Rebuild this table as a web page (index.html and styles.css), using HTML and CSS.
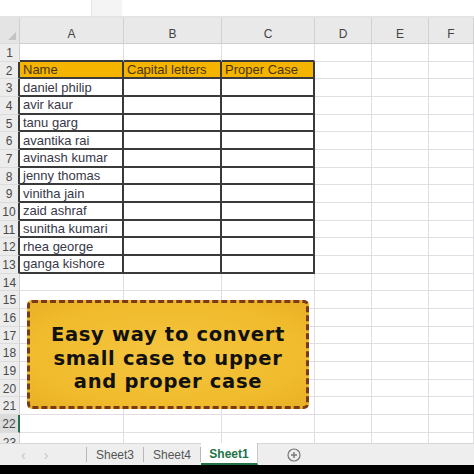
FILE: index.html
```html
<!DOCTYPE html>
<html>
<head>
<meta charset="utf-8">
<link rel="stylesheet" href="styles.css">
</head>
<body>
<div class="app">
  <div class="topbar"><div class="namebox"></div><div class="fx"></div></div>
  <div class="sheet">
    <div class="row head">
      <div class="rh corner"></div><div class="ch">A</div><div class="ch">B</div><div class="ch">C</div><div class="ch">D</div><div class="ch">E</div><div class="ch">F</div>
    </div>
    <div class="row"><div class="rh">1</div><div class="c tb"></div><div class="c tb"></div><div class="c tb"></div><div class="c"></div><div class="c"></div><div class="c"></div></div>
    <div class="row"><div class="rh dk">2</div><div class="c t y">Name</div><div class="c t y">Capital letters</div><div class="c t y">Proper Case</div><div class="c"></div><div class="c"></div><div class="c"></div></div>
    <div class="row"><div class="rh dk">3</div><div class="c t">daniel philip</div><div class="c t"></div><div class="c t"></div><div class="c"></div><div class="c"></div><div class="c"></div></div>
    <div class="row"><div class="rh dk">4</div><div class="c t">avir kaur</div><div class="c t"></div><div class="c t"></div><div class="c"></div><div class="c"></div><div class="c"></div></div>
    <div class="row"><div class="rh dk">5</div><div class="c t">tanu garg</div><div class="c t"></div><div class="c t"></div><div class="c"></div><div class="c"></div><div class="c"></div></div>
    <div class="row"><div class="rh dk">6</div><div class="c t">avantika rai</div><div class="c t"></div><div class="c t"></div><div class="c"></div><div class="c"></div><div class="c"></div></div>
    <div class="row"><div class="rh dk">7</div><div class="c t">avinash kumar</div><div class="c t"></div><div class="c t"></div><div class="c"></div><div class="c"></div><div class="c"></div></div>
    <div class="row"><div class="rh dk">8</div><div class="c t">jenny thomas</div><div class="c t"></div><div class="c t"></div><div class="c"></div><div class="c"></div><div class="c"></div></div>
    <div class="row"><div class="rh dk">9</div><div class="c t">vinitha jain</div><div class="c t"></div><div class="c t"></div><div class="c"></div><div class="c"></div><div class="c"></div></div>
    <div class="row"><div class="rh dk">10</div><div class="c t">zaid ashraf</div><div class="c t"></div><div class="c t"></div><div class="c"></div><div class="c"></div><div class="c"></div></div>
    <div class="row"><div class="rh dk">11</div><div class="c t">sunitha kumari</div><div class="c t"></div><div class="c t"></div><div class="c"></div><div class="c"></div><div class="c"></div></div>
    <div class="row"><div class="rh dk">12</div><div class="c t">rhea george</div><div class="c t"></div><div class="c t"></div><div class="c"></div><div class="c"></div><div class="c"></div></div>
    <div class="row"><div class="rh dk">13</div><div class="c t">ganga kishore</div><div class="c t"></div><div class="c t"></div><div class="c"></div><div class="c"></div><div class="c"></div></div>
    <div class="row"><div class="rh">14</div><div class="c"></div><div class="c"></div><div class="c"></div><div class="c"></div><div class="c"></div><div class="c"></div></div>
    <div class="row"><div class="rh">15</div><div class="c"></div><div class="c"></div><div class="c"></div><div class="c"></div><div class="c"></div><div class="c"></div></div>
    <div class="row"><div class="rh">16</div><div class="c"></div><div class="c"></div><div class="c"></div><div class="c"></div><div class="c"></div><div class="c"></div></div>
    <div class="row"><div class="rh">17</div><div class="c"></div><div class="c"></div><div class="c"></div><div class="c"></div><div class="c"></div><div class="c"></div></div>
    <div class="row"><div class="rh">18</div><div class="c"></div><div class="c"></div><div class="c"></div><div class="c"></div><div class="c"></div><div class="c"></div></div>
    <div class="row"><div class="rh">19</div><div class="c"></div><div class="c"></div><div class="c"></div><div class="c"></div><div class="c"></div><div class="c"></div></div>
    <div class="row"><div class="rh">20</div><div class="c"></div><div class="c"></div><div class="c"></div><div class="c"></div><div class="c"></div><div class="c"></div></div>
    <div class="row"><div class="rh">21</div><div class="c"></div><div class="c"></div><div class="c"></div><div class="c"></div><div class="c"></div><div class="c"></div></div>
    <div class="row"><div class="rh sel">22</div><div class="c"></div><div class="c"></div><div class="c"></div><div class="c"></div><div class="c"></div><div class="c"></div></div>
    <div class="row last"><div class="rh"><span>23</span></div><div class="c"></div><div class="c"></div><div class="c"></div><div class="c"></div><div class="c"></div><div class="c"></div></div>
    <div class="callout">Easy way to convert<br>small case to upper<br>and proper case</div>
  </div>
  <div class="tabs">
    <div class="nav"><span>&#8249;</span><span>&#8250;</span></div>
    <div class="tab">Sheet3</div>
    <div class="tab">Sheet4</div>
    <div class="tab active">Sheet1</div>
    <div class="add"><svg width="14" height="14" viewBox="0 0 14 14"><circle cx="7" cy="7" r="6" fill="none" stroke="#777" stroke-width="1.2"/><path d="M7 4v6M4 7h6" stroke="#777" stroke-width="1.4"/></svg></div>
  </div>
  <div class="blackbar"></div>
</div>
</body>
</html>
```

FILE: styles.css
```css
* { box-sizing: border-box; }
html, body { margin: 0; padding: 0; }
body { width: 474px; height: 474px; overflow: hidden; background: #fff; font-family: "Liberation Sans", Arial, sans-serif; }
.app { width: 474px; height: 474px; display: flex; flex-direction: column; }
.topbar { height: 18px; flex: none; display: flex; background: #fff; border-bottom: 2px solid #e4e4e4; }
.namebox { width: 92px; border-right: 1px solid #e6e6e6; }
.fx { width: 30px; background: #f4f4f4; }
.sheet { flex: 1; position: relative; overflow: hidden; background: #fff; }
.row { display: grid; grid-template-columns: 20px 104px 98px 93px 57px 57px 45px; height: 17.68px; }
.row.head { height: 26px; background: #e9e9e9; }
.rh { background: #ececec; border-right: 1px solid #cfcfcf; border-bottom: 1px solid #dcdcdc; color: #4a4a4a; font-size: 12px; display: flex; align-items: center; justify-content: center; padding-top: 1px; }
.rh.dk { border-right: 2px solid #3a3a3a; }
.rh.sel { background: #dcdcdc; border-right: 2px solid #217346; }
.row.last .rh { align-items: flex-start; padding-top: 3px; }
.corner { background: #e4e4e4; position: relative; }
.corner::after { content: ""; position: absolute; right: 3px; bottom: 3px; border-style: solid; border-width: 0 0 8px 8px; border-color: transparent transparent #c4c4c4 transparent; }
.ch { border-right: 1px solid #d2d2d2; border-bottom: 1px solid #cfcfcf; color: #444; font-size: 12px; display: flex; align-items: flex-end; justify-content: center; padding-bottom: 2px; }
.c { border-right: 1px solid #e0dde3; border-bottom: 1px solid #e0dde3; font-size: 13px; color: #383848; padding-left: 3px; display: flex; align-items: center; white-space: nowrap; overflow: hidden; }
.c.tb { border-bottom: 2px solid #3a3a3a; }
.c.t { border-right: 2px solid #3a3a3a; border-bottom: 2px solid #3a3a3a; }
.c.y { background: #f4b400; color: #4a3600; }
.callout { position: absolute; left: 27px; top: 282px; width: 282px; height: 109px; background: radial-gradient(ellipse at center, #f5c540 0%, #f0bb2c 70%, #e9b126 100%); border: 3px dashed #7b3a16; border-radius: 5px; display: flex; align-items: center; justify-content: center; text-align: center; font-family: "DejaVu Sans", Verdana, sans-serif; font-weight: bold; font-size: 19.5px; letter-spacing: 0.7px; line-height: 23.5px; color: #111; padding-top: 8px; white-space: nowrap; }
.tabs { height: 22px; flex: none; background: #eeeeee; display: flex; align-items: stretch; font-size: 12px; color: #555; border-top: 1px solid #d8d8d8; }
.nav { width: 87px; display: flex; align-items: center; gap: 18px; padding-left: 21px; color: #c4c4c4; font-size: 14px; border-right: 1px solid #b8b8b8; margin: 3px 0; }
.tab { width: 57px; display: flex; align-items: center; justify-content: center; border-right: 1px solid #b8b8b8; margin: 3px 0; }
.tab.active { background: #fff; color: #217346; font-weight: bold; margin: -1px 0 0; border-right: 1px solid #c8c8c8; border-bottom: 2px solid #217346; padding-top: 1px; }
.add { width: 72px; display: flex; align-items: center; justify-content: center; }
.blackbar { height: 9px; flex: none; background: #000; }
```
